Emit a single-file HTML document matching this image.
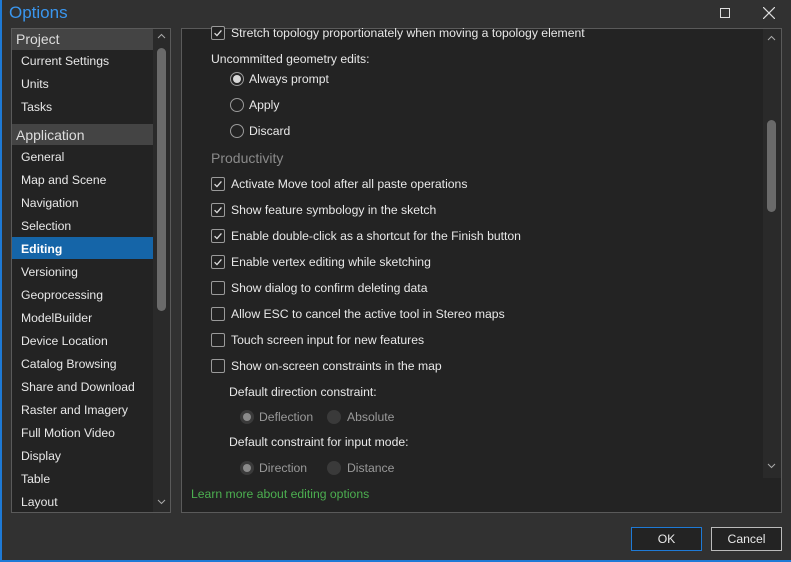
<!DOCTYPE html>
<html><head><meta charset="utf-8"><style>
*{margin:0;padding:0;box-sizing:border-box}
body{width:791px;height:562px;background:#313131;position:relative;overflow:hidden;font-family:"Liberation Sans",sans-serif;font-size:12.2px;color:#e8e8e8}
.a{position:absolute;white-space:nowrap}
.t{position:absolute;white-space:nowrap;line-height:16px}
.cb{position:absolute;width:14px;height:14px;border:1px solid #9a9a9a;border-radius:2px;background:#222}
.rb{position:absolute;width:14px;height:14px;border:1px solid #9a9a9a;border-radius:50%}
.rb.on::after{content:"";position:absolute;left:2px;top:2px;width:8px;height:8px;border-radius:50%;background:#d8d8d8}
.rd{position:absolute;width:14px;height:14px;border-radius:50%;background:#3a3a3a}
.rd.on::after{content:"";position:absolute;left:3px;top:3px;width:8px;height:8px;border-radius:50%;background:#8a8a8a}
</style></head><body>
<div class="a" style="left:0;top:0;width:2px;height:562px;background:#1e7ad6"></div>
<div class="a" style="left:0;top:560px;width:791px;height:2px;background:#1e7ad6"></div>
<div class="a" style="left:9px;top:3px;font-size:17px;color:#3a96ee">Options</div>
<div class="a" style="left:720px;top:8px;width:10px;height:10px;border:1px solid #ddd"></div>
<svg class="a" style="left:763px;top:7px" width="12" height="12"><path d="M0 0L12 12M12 0L0 12" stroke="#ddd" stroke-width="1.2"/></svg>

<div class="a" style="left:11px;top:28px;width:160px;height:485px;background:#232323;border:1px solid #5a5a5a"></div>
<div class="a" style="left:12px;top:29px;width:141px;height:21px;background:#444"></div>
<div class="t" style="left:16px;top:31px;font-size:14px;color:#ddd">Project</div>
<div class="t" style="left:21px;top:53px">Current Settings</div>
<div class="t" style="left:21px;top:76px">Units</div>
<div class="t" style="left:21px;top:99px">Tasks</div>
<div class="a" style="left:12px;top:124px;width:141px;height:21px;background:#444"></div>
<div class="t" style="left:16px;top:127px;font-size:14px;color:#ddd">Application</div>
<div class="a" style="left:12px;top:237px;width:141px;height:22px;background:#1565a8"></div>
<div class="t" style="left:21px;top:149px">General</div>
<div class="t" style="left:21px;top:172px">Map and Scene</div>
<div class="t" style="left:21px;top:195px">Navigation</div>
<div class="t" style="left:21px;top:218px">Selection</div>
<div class="t" style="left:21px;top:241px;font-weight:bold;color:#fff">Editing</div>
<div class="t" style="left:21px;top:264px">Versioning</div>
<div class="t" style="left:21px;top:287px">Geoprocessing</div>
<div class="t" style="left:21px;top:310px">ModelBuilder</div>
<div class="t" style="left:21px;top:333px">Device Location</div>
<div class="t" style="left:21px;top:356px">Catalog Browsing</div>
<div class="t" style="left:21px;top:379px">Share and Download</div>
<div class="t" style="left:21px;top:402px">Raster and Imagery</div>
<div class="t" style="left:21px;top:425px">Full Motion Video</div>
<div class="t" style="left:21px;top:448px">Display</div>
<div class="t" style="left:21px;top:471px">Table</div>
<div class="t" style="left:21px;top:494px">Layout</div>
<div class="a" style="left:153px;top:29px;width:17px;height:483px;background:#2a2a2a"></div>
<div class="a" style="left:157px;top:48px;width:9px;height:263px;border-radius:5px;background:#6a6a6a"></div>
<svg class="a" style="left:157px;top:33px" width="9" height="6"><path d="M1 5L4.5 1.5L8 5" stroke="#aaa" fill="none"/></svg>
<svg class="a" style="left:157px;top:499px" width="9" height="6"><path d="M1 1L4.5 4.5L8 1" stroke="#aaa" fill="none"/></svg>

<div class="a" style="left:181px;top:28px;width:601px;height:485px;background:#232323;border:1px solid #5a5a5a"></div>
<div class="a" style="left:763px;top:29px;width:18px;height:449px;background:#2a2a2a"></div>
<div class="a" style="left:767px;top:120px;width:9px;height:92px;border-radius:5px;background:#6a6a6a"></div>
<svg class="a" style="left:767px;top:35px" width="9" height="6"><path d="M1 5L4.5 1.5L8 5" stroke="#aaa" fill="none"/></svg>
<svg class="a" style="left:767px;top:463px" width="9" height="6"><path d="M1 1L4.5 4.5L8 1" stroke="#aaa" fill="none"/></svg>

<svg width="0" height="0" style="position:absolute"><defs><symbol id="ck" viewBox="0 0 14 14"><path d="M3 7.2L5.8 10L11 4" stroke="#ddd" stroke-width="1.5" fill="none"/></symbol></defs></svg>

<div class="cb" style="left:211px;top:26px"><svg width="12" height="12" viewBox="0 0 14 14" style="position:absolute;left:0;top:0"><use href="#ck"/></svg></div>
<div class="t" style="left:231px;top:25px">Stretch topology proportionately when moving a topology element</div>
<div class="t" style="left:211px;top:51px">Uncommitted geometry edits:</div>
<div class="rb on" style="left:230px;top:72px"></div><div class="t" style="left:249px;top:71px">Always prompt</div>
<div class="rb" style="left:230px;top:98px"></div><div class="t" style="left:249px;top:97px">Apply</div>
<div class="rb" style="left:230px;top:124px"></div><div class="t" style="left:249px;top:123px">Discard</div>
<div class="t" style="left:211px;top:150px;font-size:14px;color:#8a8a8a">Productivity</div>

<div class="cb" style="left:211px;top:177px"><svg width="12" height="12" viewBox="0 0 14 14"><use href="#ck"/></svg></div><div class="t" style="left:231px;top:176px">Activate Move tool after all paste operations</div>
<div class="cb" style="left:211px;top:203px"><svg width="12" height="12" viewBox="0 0 14 14"><use href="#ck"/></svg></div><div class="t" style="left:231px;top:202px">Show feature symbology in the sketch</div>
<div class="cb" style="left:211px;top:229px"><svg width="12" height="12" viewBox="0 0 14 14"><use href="#ck"/></svg></div><div class="t" style="left:231px;top:228px">Enable double-click as a shortcut for the Finish button</div>
<div class="cb" style="left:211px;top:255px"><svg width="12" height="12" viewBox="0 0 14 14"><use href="#ck"/></svg></div><div class="t" style="left:231px;top:254px">Enable vertex editing while sketching</div>
<div class="cb" style="left:211px;top:281px"></div><div class="t" style="left:231px;top:280px">Show dialog to confirm deleting data</div>
<div class="cb" style="left:211px;top:307px"></div><div class="t" style="left:231px;top:306px">Allow ESC to cancel the active tool in Stereo maps</div>
<div class="cb" style="left:211px;top:333px"></div><div class="t" style="left:231px;top:332px">Touch screen input for new features</div>
<div class="cb" style="left:211px;top:359px"></div><div class="t" style="left:231px;top:358px">Show on-screen constraints in the map</div>

<div class="t" style="left:229px;top:384px">Default direction constraint:</div>
<div class="rd on" style="left:240px;top:410px"></div><div class="t" style="left:259px;top:409px;color:#999">Deflection</div>
<div class="rd" style="left:327px;top:410px"></div><div class="t" style="left:347px;top:409px;color:#999">Absolute</div>
<div class="t" style="left:229px;top:434px">Default constraint for input mode:</div>
<div class="rd on" style="left:240px;top:461px"></div><div class="t" style="left:259px;top:460px;color:#999">Direction</div>
<div class="rd" style="left:327px;top:461px"></div><div class="t" style="left:347px;top:460px;color:#999">Distance</div>

<div class="t" style="left:191px;top:486px;color:#4caf50">Learn more about editing options</div>

<div class="a" style="left:631px;top:527px;width:71px;height:24px;border:1px solid #1e7ad6;background:#232323;text-align:center;line-height:22px">OK</div>
<div class="a" style="left:711px;top:527px;width:71px;height:24px;border:1px solid #bbb;background:#232323;text-align:center;line-height:22px">Cancel</div>
</body></html>
